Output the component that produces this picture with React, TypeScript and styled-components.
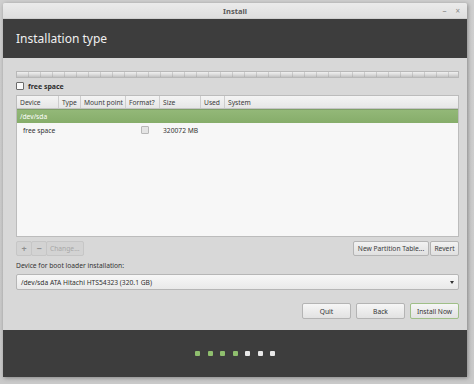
import React from "react";
import styled, { createGlobalStyle } from "styled-components";

const GlobalStyle = createGlobalStyle`
  html, body {
    margin: 0;
    padding: 0;
    background: #cdcdcd;
  }
  body {
    font-family: "Noto Sans", "Open Sans", sans-serif;
  }
`;

const S = {
  Page: styled.div`
    width: 474px;
    height: 384px;
    padding: 3px 7px 7px 3px;
    box-sizing: border-box;
    background: linear-gradient(#cfcfcf, #c9c9c9);
  `,
  Window: styled.div`
    width: 464px;
    height: 374px;
    display: flex;
    flex-direction: column;
    background: #d8d8d8;
    box-shadow: 1px 1px 4px rgba(0, 0, 0, 0.35);
    border-radius: 2px 2px 0 0;
    overflow: hidden;
  `,
  TitleBar: styled.div`
    height: 16px;
    flex: none;
    display: grid;
    grid-template-columns: 1fr auto 1fr;
    align-items: center;
    background: linear-gradient(#ebebeb, #dedede);
    border-bottom: 1px solid #cfcfcf;
    box-sizing: border-box;
  `,
  Title: styled.div`
    grid-column: 2;
    font-size: 7.5px;
    font-weight: bold;
    color: #5a5a5a;
  `,
  WinButtons: styled.div`
    grid-column: 3;
    justify-self: end;
    display: flex;
    gap: 9px;
    padding-right: 7px;
    color: #8a8a8a;
    font-size: 8px;
    line-height: 1;
  `,
  Header: styled.div`
    height: 39px;
    flex: none;
    display: flex;
    align-items: center;
    padding-left: 13px;
    background: #3d3d3d;
    color: #f0f0f0;
    font-size: 12px;
  `,
  Content: styled.div`
    flex: 1;
    display: flex;
    flex-direction: column;
    padding: 13px 8px 0 13px;
    background: #d8d8d8;
  `,
  PartBar: styled.div`
    height: 7px;
    border: 1px solid #b8b8b8;
    box-sizing: border-box;
    background: repeating-linear-gradient(
        90deg,
        transparent 0,
        transparent 11px,
        rgba(150, 150, 150, 0.35) 11px,
        rgba(150, 150, 150, 0.35) 12px
      ),
      linear-gradient(#f0f0f0, #dadada 55%, #c2c2c2);
  `,
  CheckRow: styled.div`
    height: 12px;
    margin-top: 2px;
    display: flex;
    align-items: center;
    gap: 4px;
    font-size: 7px;
    font-weight: bold;
    color: #2e2e2e;
  `,
  Check: styled.span<{ $faded?: boolean }>`
    width: 6px;
    height: 6px;
    border: 1px solid ${(p) => (p.$faded ? "#b8b8b8" : "#6b6b6b")};
    background: ${(p) => (p.$faded ? "#e4e4e4" : "#fafafa")};
    border-radius: 1px;
    display: inline-block;
  `,
  Table: styled.div`
    margin-top: 3px;
    height: 142px;
    display: flex;
    flex-direction: column;
    background: #f7f7f7;
    border: 1px solid #bcbcbc;
    box-sizing: border-box;
  `,
  HeadRow: styled.div`
    display: grid;
    grid-template-columns: 42px 22px 45px 34px 41px 24px 1fr;
    height: 12px;
    background: linear-gradient(#f4f4f4, #e6e6e6);
    border-bottom: 1px solid #c4c4c4;
  `,
  HeadCell: styled.div`
    font-size: 6.7px;
    color: #3a3a3a;
    padding-left: 3px;
    display: flex;
    align-items: center;
    border-right: 1px solid #cdcdcd;
    &:last-child {
      border-right: none;
    }
  `,
  SelRow: styled.div`
    height: 13px;
    display: flex;
    align-items: center;
    padding-left: 3px;
    font-size: 6.7px;
    color: #ffffff;
    background: linear-gradient(#93b878, #86ad6a);
    border-top: 1px solid #7f9f68;
  `,
  Row: styled.div`
    display: grid;
    grid-template-columns: 42px 22px 45px 34px 41px 24px 1fr;
    height: 14px;
    font-size: 6.7px;
    color: #333333;
    align-items: center;
  `,
  Cell: styled.div<{ $indent?: number; $center?: boolean }>`
    padding-left: ${(p) => p.$indent ?? 3}px;
    display: flex;
    justify-content: ${(p) => (p.$center ? "center" : "flex-start")};
    white-space: nowrap;
  `,
  ToolRow: styled.div`
    margin-top: 4px;
    height: 15px;
    display: flex;
    align-items: center;
    justify-content: space-between;
  `,
  Group: styled.div`
    display: flex;
    gap: 2px;
  `,
  Joined: styled.div`
    display: flex;
  `,
  SmallBtn: styled.div<{ $w?: number; $disabled?: boolean; $glyph?: boolean }>`
    height: 15px;
    min-width: ${(p) => p.$w ?? 0}px;
    padding: 0 3px;
    box-sizing: border-box;
    display: flex;
    align-items: center;
    justify-content: center;
    font-size: ${(p) => (p.$glyph ? "9px" : "6.7px")};
    font-weight: ${(p) => (p.$glyph ? "bold" : "normal")};
    color: ${(p) =>
      p.$glyph ? "#8e8e8e" : p.$disabled ? "#a8a8a8" : "#3a3a3a"};
    background: ${(p) =>
      p.$disabled ? "#d3d3d3" : "linear-gradient(#f2f2f2, #e0e0e0)"};
    border: 1px solid ${(p) => (p.$disabled ? "#c6c6c6" : "#b4b4b4")};
    border-radius: 2px;
    & + & {
      margin-left: -1px;
    }
  `,
  Label: styled.div`
    margin-top: 4px;
    font-size: 6.7px;
    color: #333333;
    height: 10px;
    display: flex;
    align-items: center;
  `,
  Combo: styled.div`
    margin-top: 4px;
    height: 16px;
    display: flex;
    align-items: center;
    justify-content: space-between;
    padding: 0 4px;
    box-sizing: border-box;
    font-size: 6.7px;
    color: #2e2e2e;
    background: linear-gradient(#f7f7f7, #e9e9e9);
    border: 1px solid #b6b6b6;
    border-radius: 2px;
  `,
  Arrow: styled.span`
    width: 0;
    height: 0;
    border-left: 2.5px solid transparent;
    border-right: 2.5px solid transparent;
    border-top: 3px solid #333333;
  `,
  Actions: styled.div`
    margin-top: 13px;
    display: flex;
    justify-content: flex-end;
    gap: 5px;
  `,
  ActionBtn: styled.div<{ $default?: boolean }>`
    width: 49px;
    height: 16px;
    box-sizing: border-box;
    display: flex;
    align-items: center;
    justify-content: center;
    font-size: 6.7px;
    color: #333333;
    background: linear-gradient(#f6f6f6, #e2e2e2);
    border: 1px solid ${(p) => (p.$default ? "#9fbf88" : "#b4b4b4")};
    border-radius: 2px;
  `,
  Footer: styled.div`
    height: 47px;
    flex: none;
    display: flex;
    align-items: center;
    justify-content: center;
    gap: 7.5px;
    background: #3d3d3d;
  `,
  Dot: styled.span<{ $done?: boolean }>`
    width: 5px;
    height: 5px;
    border-radius: 1px;
    background: ${(p) => (p.$done ? "#8fbf6e" : "#e8e8e8")};
  `,
};

const columns = ["Device", "Type", "Mount point", "Format?", "Size", "Used", "System"];
const steps = [true, true, true, true, false, false, false];

const App = () => {
  return (
    <>
      <GlobalStyle />
      <S.Page>
        <S.Window>
          <S.TitleBar>
            <S.Title>Install</S.Title>
            <S.WinButtons>
              <span>–</span>
              <span>×</span>
            </S.WinButtons>
          </S.TitleBar>
          <S.Header>Installation type</S.Header>
          <S.Content>
            <S.PartBar />
            <S.CheckRow>
              <S.Check />
              free space
            </S.CheckRow>
            <S.Table>
              <S.HeadRow>
                {columns.map((c) => (
                  <S.HeadCell key={c}>{c}</S.HeadCell>
                ))}
              </S.HeadRow>
              <S.SelRow>/dev/sda</S.SelRow>
              <S.Row>
                <S.Cell $indent={6}>free space</S.Cell>
                <S.Cell />
                <S.Cell />
                <S.Cell $center>
                  <S.Check $faded />
                </S.Cell>
                <S.Cell>320072 MB</S.Cell>
                <S.Cell />
                <S.Cell />
              </S.Row>
            </S.Table>
            <S.ToolRow>
              <S.Joined>
                <S.SmallBtn $w={16} $disabled $glyph>+</S.SmallBtn>
                <S.SmallBtn $w={16} $disabled $glyph>−</S.SmallBtn>
                <S.SmallBtn $w={34} $disabled>Change...</S.SmallBtn>
              </S.Joined>
              <S.Group>
                <S.SmallBtn $w={76}>New Partition Table...</S.SmallBtn>
                <S.SmallBtn $w={29}>Revert</S.SmallBtn>
              </S.Group>
            </S.ToolRow>
            <S.Label>Device for boot loader installation:</S.Label>
            <S.Combo>
              <span>/dev/sda ATA Hitachi HTS54323 (320.1 GB)</span>
              <S.Arrow />
            </S.Combo>
            <S.Actions>
              <S.ActionBtn>Quit</S.ActionBtn>
              <S.ActionBtn>Back</S.ActionBtn>
              <S.ActionBtn $default>Install Now</S.ActionBtn>
            </S.Actions>
          </S.Content>
          <S.Footer>
            {steps.map((d, i) => (
              <S.Dot key={i} $done={d} />
            ))}
          </S.Footer>
        </S.Window>
      </S.Page>
    </>
  );
};

export default App;
